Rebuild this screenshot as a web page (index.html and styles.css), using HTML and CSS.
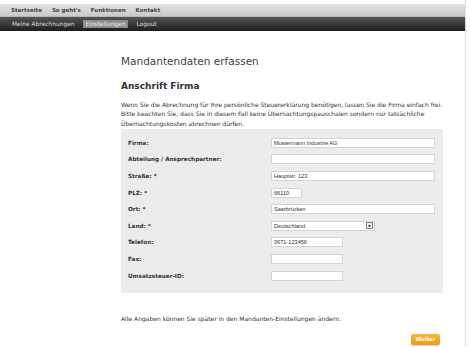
FILE: index.html
```html
<!DOCTYPE html>
<html lang="de">
<head>
    <meta charset="UTF-8">
    <title>Mandantendaten erfassen</title>
    <link rel="stylesheet" href="styles.css">
</head>
<body>
    <div class="page">
        <div class="topnav">
            <a href="#">Startseite</a>
            <a href="#">So geht's</a>
            <a href="#">Funktionen</a>
            <a href="#">Kontakt</a>
        </div>
        <div class="subnav">
            <a href="#">Meine Abrechnungen</a>
            <a href="#" class="active">Einstellungen</a>
            <a href="#">Logout</a>
        </div>

        <div class="content">
            <h1>Mandantendaten erfassen</h1>
            <h2>Anschrift Firma</h2>
            <p class="intro">Wenn Sie die Abrechnung für Ihre persönliche Steuererklärung benötigen, lassen Sie die Firma einfach frei. Bitte beachten Sie, dass Sie in diesem Fall keine Übernachtungspauschalen sondern nur tatsächliche Übernachtungskosten abrechnen dürfen.</p>

            <form class="form-box">
                <div class="form-row">
                    <label>Firma:</label>
                    <input type="text" class="wide" value="Mustermann Industrie AG">
                </div>
                <div class="form-row">
                    <label>Abteilung / Ansprechpartner:</label>
                    <input type="text" class="wide" value="">
                </div>
                <div class="form-row">
                    <label>Straße: *</label>
                    <input type="text" class="wide" value="Hauptstr. 123">
                </div>
                <div class="form-row">
                    <label>PLZ: *</label>
                    <input type="text" class="tiny" value="66110">
                </div>
                <div class="form-row">
                    <label>Ort: *</label>
                    <input type="text" class="wide" value="Saarbrücken">
                </div>
                <div class="form-row">
                    <label>Land: *</label>
                    <div class="select">
                        <span>Deutschland</span>
                        <span class="arrow">
                            <svg width="3" height="2" viewBox="0 0 3 2"><path d="M0 0 L3 0 L1.5 2 Z" fill="#222"/></svg>
                        </span>
                    </div>
                </div>
                <div class="form-row">
                    <label>Telefon:</label>
                    <input type="text" class="mid" value="0671-123456">
                </div>
                <div class="form-row">
                    <label>Fax:</label>
                    <input type="text" class="mid" value="">
                </div>
                <div class="form-row">
                    <label>Umsatzsteuer-ID:</label>
                    <input type="text" class="mid" value="">
                </div>
            </form>

            <p class="note">Alle Angaben können Sie später in den Mandanten-Einstellungen ändern.</p>

            <div class="actions">
                <button type="button">Weiter</button>
            </div>
        </div>
    </div>
</body>
</html>
```

FILE: styles.css
```css
body {
    margin: 0;
    background: #fff;
    font-family: "DejaVu Sans", Verdana, sans-serif;
    color: #333;
}
.page {
    width: 466px;
    min-height: 347px;
    border-right: 1px solid #e2e2e2;
    padding-top: 4px;
    box-sizing: border-box;
}
.topnav {
    height: 13px;
    background: linear-gradient(#e4e4e4, #c9c9c9);
    border-bottom: 1px solid #b5b5b5;
    box-sizing: border-box;
    display: flex;
    align-items: center;
    padding-left: 11px;
    gap: 10px;
}
.topnav a {
    font-size: 5.5px;
    font-weight: bold;
    color: #444;
    text-decoration: none;
}
.subnav {
    height: 14px;
    background: linear-gradient(#555, #1c1c1c);
    display: flex;
    align-items: center;
    padding-left: 9px;
    gap: 5px;
}
.subnav a {
    font-size: 5.9px;
    color: #ddd;
    text-decoration: none;
    padding: 1px 3px;
}
.subnav a.active {
    background: #8c8c8c;
    color: #eee;
}
.content {
    padding: 0 22px 0 121px;
}
h1 {
    font-size: 10.5px;
    font-weight: normal;
    color: #444;
    margin: 24px 0 0;
    line-height: 13px;
}
h2 {
    font-size: 9px;
    font-weight: bold;
    color: #333;
    margin: 13px 0 0;
    line-height: 11px;
}
.intro {
    font-size: 6px;
    line-height: 9.3px;
    margin: 8px 0 0;
}
.form-box {
    background: #ececec;
    margin: 1px 0 0;
    padding: 5.7px 8px 9px 7px;
}
.form-row {
    display: flex;
    align-items: center;
    height: 16.6px;
}
.form-row label {
    width: 143px;
    font-size: 5.7px;
    font-weight: bold;
    color: #333;
}
.form-row input, .select {
    height: 10px;
    box-sizing: border-box;
    border: 1px solid #d4d4d4;
    background: #fff;
    font-family: "Liberation Sans", Arial, sans-serif;
    font-size: 5.6px;
    color: #333;
    padding: 0 2px;
    margin: 0;
    outline: none;
}
.wide { width: 164px; }
.tiny { width: 31px; }
.mid { width: 72px; }
.select {
    width: 104px;
    display: flex;
    align-items: center;
    justify-content: space-between;
    padding-right: 1px;
}
.select .arrow {
    width: 7px;
    height: 7px;
    box-sizing: border-box;
    border: 1px solid #888;
    background: #eee;
    display: flex;
    align-items: center;
    justify-content: center;
}
.select .arrow svg {
    display: block;
}
.note {
    font-size: 6px;
    margin: 21px 0 0;
    line-height: 9px;
}
.actions {
    display: flex;
    justify-content: flex-end;
    margin-top: 11px;
    padding-right: 3px;
}
button {
    width: 29px;
    height: 11px;
    padding: 0;
    border: none;
    border-radius: 2px;
    background: linear-gradient(#fbb63c, #f29a0e);
    color: #fff;
    font-family: "DejaVu Sans", Verdana, sans-serif;
    font-size: 5.4px;
    font-weight: bold;
    box-shadow: 0 1px 1px rgba(0,0,0,0.15);
}
```
